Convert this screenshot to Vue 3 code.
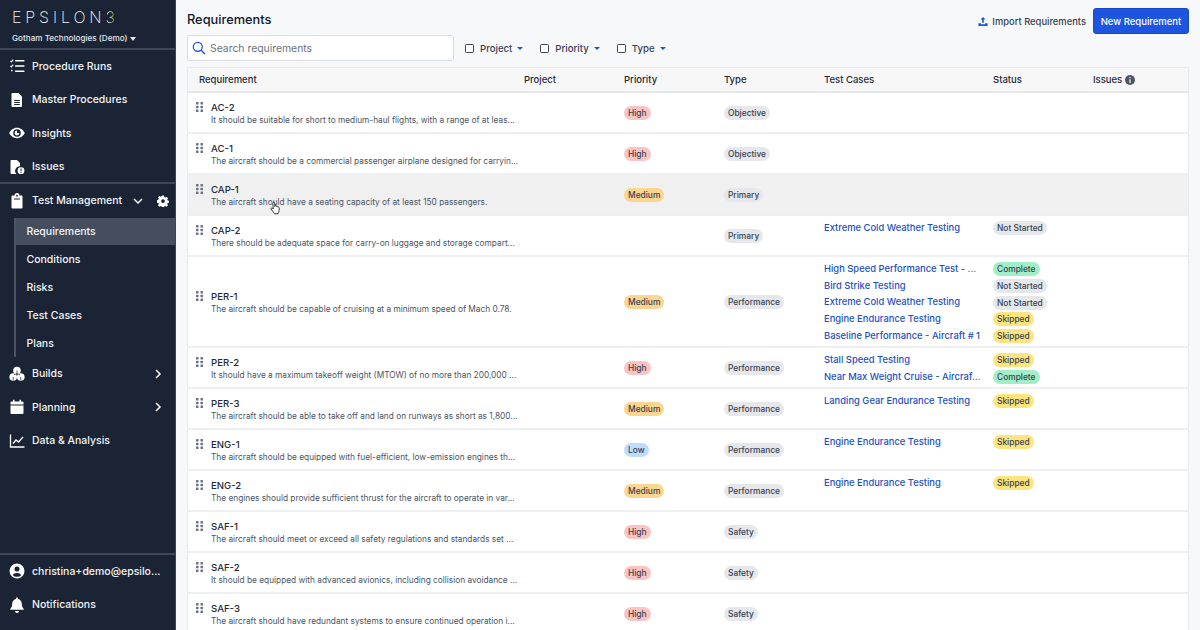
<script setup>
const nav1 = [
  { label: 'Procedure Runs', icon: 'list' },
  { label: 'Master Procedures', icon: 'doc' },
  { label: 'Insights', icon: 'eye' },
  { label: 'Issues', icon: 'issue' },
]
const subs = ['Requirements', 'Conditions', 'Risks', 'Test Cases', 'Plans']
const filters = ['Project', 'Priority', 'Type']
const heads = ['Requirement', 'Project', 'Priority', 'Type', 'Test Cases', 'Status', 'Issues']
const ES = 'Engine Endurance Testing'
const rows = [
  { id: 'AC-2', d: 'It should be suitable for short to medium-haul flights, with a range of at leas...', p: 'High', t: 'Objective', c: [] },
  { id: 'AC-1', d: 'The aircraft should be a commercial passenger airplane designed for carryin...', p: 'High', t: 'Objective', c: [] },
  { id: 'CAP-1', d: 'The aircraft should have a seating capacity of at least 150 passengers.', p: 'Medium', t: 'Primary', c: [], hover: true },
  { id: 'CAP-2', d: 'There should be adequate space for carry-on luggage and storage compart...', p: '', t: 'Primary', c: [['Extreme Cold Weather Testing', 'Not Started']] },
  { id: 'PER-1', d: 'The aircraft should be capable of cruising at a minimum speed of Mach 0.78.', p: 'Medium', t: 'Performance', c: [
    ['High Speed Performance Test - ...', 'Complete'], ['Bird Strike Testing', 'Not Started'], ['Extreme Cold Weather Testing', 'Not Started'], [ES, 'Skipped'], ['Baseline Performance - Aircraft # 1', 'Skipped'],
  ] },
  { id: 'PER-2', d: 'It should have a maximum takeoff weight (MTOW) of no more than 200,000 ...', p: 'High', t: 'Performance', c: [['Stall Speed Testing', 'Skipped'], ['Near Max Weight Cruise - Aircraf...', 'Complete']] },
  { id: 'PER-3', d: 'The aircraft should be able to take off and land on runways as short as 1,800...', p: 'Medium', t: 'Performance', c: [['Landing Gear Endurance Testing', 'Skipped']] },
  { id: 'ENG-1', d: 'The aircraft should be equipped with fuel-efficient, low-emission engines th...', p: 'Low', t: 'Performance', c: [[ES, 'Skipped']] },
  { id: 'ENG-2', d: 'The engines should provide sufficient thrust for the aircraft to operate in var...', p: 'Medium', t: 'Performance', c: [[ES, 'Skipped']] },
  { id: 'SAF-1', d: 'The aircraft should meet or exceed all safety regulations and standards set ...', p: 'High', t: 'Safety', c: [] },
  { id: 'SAF-2', d: 'It should be equipped with advanced avionics, including collision avoidance ...', p: 'High', t: 'Safety', c: [] },
  { id: 'SAF-3', d: 'The aircraft should have redundant systems to ensure continued operation i...', p: 'High', t: 'Safety', c: [] },
]
const cls = (s) => s.toLowerCase().replace(' ', '-')
</script>

<template>
  <div class="app">
    <aside class="side">
      <div class="brand">
        <div class="logo">EPSILON<span class="three">3</span></div>
        <div class="org">Gotham Technologies (Demo) <span class="caret"></span></div>
      </div>
      <nav class="group">
        <a v-for="n in nav1" :key="n.label" class="item">
          <svg class="ic" viewBox="0 0 16 16" fill="#fff">
            <template v-if="n.icon === 'list'">
              <path d="M1.500 3l.9.9 1.800-2.200M1.500 8l.9.9 1.800-2.200" fill="none" stroke="#fff" stroke-width="1.100"/>
              <path d="M2 11.700h1.500v1.500H2z"/>
              <rect x="6" y="2" width="9.500" height="1.500" rx=".5"/><rect x="6" y="7.200" width="9.500" height="1.500" rx=".5"/><rect x="6" y="12.400" width="9.500" height="1.500" rx=".5"/>
            </template>
            <template v-else-if="n.icon === 'doc'">
              <path d="M3.500 1h6l3.500 3.500V14a1 1 0 0 1-1 1H3.500a1 1 0 0 1-1-1V2a1 1 0 0 1 1-1z"/>
              <path d="M5.200 8h5.600v1H5.200zM5.200 10h5.600v1H5.200zM5.200 12h5.600v1H5.200z" fill="#1a2435"/>
            </template>
            <template v-else-if="n.icon === 'eye'">
              <path fill-rule="evenodd" d="M8 2.800C4.500 2.800 1.600 5.200.2 8c1.400 2.800 4.300 5.200 7.800 5.200s6.400-2.400 7.800-5.200C14.400 5.200 11.500 2.800 8 2.800zM8 11.800a3.800 3.800 0 1 1 0-7.600 3.800 3.800 0 0 1 0 7.600z"/>
              <path d="M8 5.600a2.400 2.400 0 1 0 2.400 2.400H8z"/>
            </template>
            <template v-else>
              <path d="M2.500 1h5.500l3 3v3.200A4.500 4.500 0 0 0 7.600 15H2.500a1 1 0 0 1-1-1V2a1 1 0 0 1 1-1z"/>
              <circle cx="12" cy="11.700" r="3.400"/><path d="M11.500 9.500h1v2.800h-1zM11.500 13h1v1h-1z" fill="#1a2435"/>
            </template>
          </svg>
          <span>{{ n.label }}</span>
        </a>
      </nav>
      <div class="group tm">
        <a class="item">
          <svg class="ic" viewBox="0 0 16 16" fill="#fff"><path fill-rule="evenodd" d="M5.500 2.500a2.500 2.500 0 0 1 5 0H12.500a1 1 0 0 1 1 1V14.500a1 1 0 0 1-1 1h-9a1 1 0 0 1-1-1V3.500a1 1 0 0 1 1-1zM8 1.800a.9.900 0 1 0 0 1.800.9.900 0 0 0 0-1.800zM5 5.500v1h6v-1z"/></svg>
          <span>Test Management</span>
          <svg class="chev down" viewBox="0 0 12 12"><path d="M2 4l4 4 4-4" fill="none" stroke="#fff" stroke-width="1.500"/></svg>
          <svg class="gear" viewBox="0 0 16 16" fill="#fff"><path fill-rule="evenodd" d="M6.700.8h2.600l.4 2 1.400.6 1.700-1.100 1.900 1.900-1.100 1.700.6 1.400 2 .4v2.600l-2 .4-.6 1.400 1.100 1.700-1.900 1.900-1.700-1.100-1.400.6-.4 2H6.700l-.4-2-1.400-.6-1.700 1.100-1.900-1.900 1.100-1.700-.6-1.400-2-.4V6.700l2-.4.6-1.400L1.300 3.200l1.900-1.900 1.700 1.100 1.400-.6zM8 5.500a2.500 2.500 0 1 0 0 5 2.500 2.500 0 0 0 0-5z"/></svg>
        </a>
        <div class="subs">
          <a v-for="(s, i) in subs" :key="s" class="sub" :class="{ on: i === 0 }">{{ s }}</a>
        </div>
        <a class="item">
          <svg class="ic" viewBox="0 0 16 16" fill="#fff"><circle cx="8" cy="4.500" r="3.800"/><circle cx="4.200" cy="11" r="3.800"/><circle cx="11.800" cy="11" r="3.800"/><path d="M8 4.500v3.300M4.200 11v3.300M11.800 11v3.300M8 7.500L4.800 9M8 7.500l3.200 1.500" stroke="#1a2435" stroke-width=".7" fill="none"/></svg>
          <span>Builds</span>
          <svg class="chev right" viewBox="0 0 12 12"><path d="M4 2l4 4-4 4" fill="none" stroke="#fff" stroke-width="1.500"/></svg>
        </a>
        <a class="item">
          <svg class="ic" viewBox="0 0 16 16" fill="#fff"><path d="M4 .8h1.500v1.700h5V.8H12v1.700h1.500a1 1 0 0 1 1 1V5.500h-13V3.500a1 1 0 0 1 1-1H4zM1.500 6.500h13V14a1 1 0 0 1-1 1h-11a1 1 0 0 1-1-1z"/></svg>
          <span>Planning</span>
          <svg class="chev right" viewBox="0 0 12 12"><path d="M4 2l4 4-4 4" fill="none" stroke="#fff" stroke-width="1.500"/></svg>
        </a>
        <a class="item">
          <svg class="ic" viewBox="0 0 16 16" fill="none" stroke="#fff" stroke-width="1.300"><path d="M1.500 1.500V14h14"/><path d="M4 10.500l3-3.500 2.500 2 4.500-5"/></svg>
          <span>Data &amp; Analysis</span>
        </a>
      </div>
      <div class="foot">
        <a class="item">
          <svg class="ic" viewBox="0 0 16 16" fill="#fff"><path fill-rule="evenodd" d="M8 .5a7.500 7.500 0 1 0 0 15 7.500 7.500 0 0 0 0-15zM8 3.500a2.500 2.500 0 1 1 0 5 2.500 2.500 0 0 1 0-5zM3.800 12.200c.6-1.500 2-2.300 4.200-2.300s3.600.8 4.200 2.300A5.700 5.700 0 0 1 8 13.800a5.700 5.700 0 0 1-4.200-1.600z"/></svg>
          <span>christina+demo@epsilo...</span>
        </a>
        <a class="item">
          <svg class="ic" viewBox="0 0 16 16" fill="#fff"><path d="M8 .5c.6 0 1 .4 1 1v.6c2.300.5 3.800 2.400 3.800 4.700 0 3 1 3.900 1.900 5v1H1.300v-1c.9-1.100 1.900-2 1.900-5 0-2.300 1.500-4.200 3.800-4.700V1.500c0-.6.400-1 1-1zM6 14h4a2 2 0 0 1-4 0z"/></svg>
          <span>Notifications</span>
        </a>
      </div>
    </aside>

    <main class="main">
      <header class="top">
        <h1>Requirements</h1>
        <div class="actions">
          <a class="import">
            <svg class="upload" viewBox="0 0 12 12" fill="#1d55e0"><path d="M6 .5L9 3.600H7v4H5v-4H3zM.5 8h3v1.300h5V8h3v3.500H.5z"/></svg>
            Import Requirements
          </a>
          <button class="new">New Requirement</button>
        </div>
      </header>
      <div class="tools">
        <label class="search">
          <svg viewBox="0 0 14 14" class="mag"><circle cx="5.800" cy="5.800" r="4.500" fill="none" stroke="#1d55e0" stroke-width="1.300"/><path d="M9.200 9.200L13 13" stroke="#1d55e0" stroke-width="1.400"/></svg>
          <span>Search requirements</span>
        </label>
        <div v-for="f in filters" :key="f" class="filter">
          <i class="box"></i><span>{{ f }}</span><i class="tri"></i>
        </div>
      </div>
      <section class="table">
        <div class="row head">
          <div v-for="h in heads" :key="h" class="cell">
            {{ h }}
            <svg v-if="h === 'Issues'" class="info" viewBox="0 0 10 10"><circle cx="5" cy="5" r="5" fill="#4b5563"/><path d="M4.400 2h1.200v1.200H4.400zM4.400 4.200h1.200V8H4.400z" fill="#fff"/></svg>
          </div>
        </div>
        <div v-for="r in rows" :key="r.id" class="row body" :class="{ hover: r.hover, tall: r.c.length > 2 }">
          <div class="cell req">
            <svg class="drag" viewBox="0 0 7 10" fill="#6b7280"><rect width="2.500" height="2.500" rx=".5"/><rect x="4.500" width="2.500" height="2.500" rx=".5"/><rect y="3.800" width="2.500" height="2.500" rx=".5"/><rect x="4.500" y="3.800" width="2.500" height="2.500" rx=".5"/><rect y="7.500" width="2.500" height="2.500" rx=".5"/><rect x="4.500" y="7.500" width="2.500" height="2.500" rx=".5"/></svg>
            <div class="txt">
              <div class="rid">{{ r.id }}</div>
              <div class="desc">{{ r.d }}</div>
            </div>
            <svg v-if="r.hover" class="hand" viewBox="0 0 12 15"><path d="M3.600 1.200c.6-.5 1.400-.1 1.500.7l.2 4 .3-1c.5-.5 1.200-.3 1.400.3l.1.600c.5-.5 1.200-.3 1.400.3l.1.500c.6-.4 1.300-.1 1.400.6.200 1.700.1 3.800-.9 5.600l-.4 1H5l-3.700-5c-.6-1 .5-1.900 1.300-1.200l1 1-.5-6.200c0-.3.200-.5.500-.7z" fill="#fff" stroke="#111" stroke-width=".9"/></svg>
          </div>
          <div class="cell"></div>
          <div class="cell mid"><span v-if="r.p" class="pill" :class="'p-' + cls(r.p)">{{ r.p }}</span></div>
          <div class="cell mid"><span class="pill grey">{{ r.t }}</span></div>
          <div class="cell cases">
            <a v-for="(c, i) in r.c" :key="i" class="case">{{ c[0] }}</a>
          </div>
          <div class="cell cases">
            <div v-for="(c, i) in r.c" :key="i" class="st"><span class="pill" :class="'s-' + cls(c[1])">{{ c[1] }}</span></div>
          </div>
          <div class="cell"></div>
        </div>
      </section>
    </main>
  </div>
</template>

<style>
html, body { margin: 0; background: #f7f8fa; }
</style>

<style scoped>
.app {
  display: flex;
  width: 1200px;
  height: 630px;
  overflow: hidden;
  font-family: Inter, "Liberation Sans", sans-serif;
  background: #f7f8fa;
  color: #111827;
}
.side {
  width: 175px;
  flex: none;
  background: #1a2435;
  border-right: 1px solid #3b4556;
  display: flex;
  flex-direction: column;
  color: #fff;
}
.brand { height: 49.500px; border-bottom: 2px solid #3c4758; padding: 8px 0 0 12px; box-sizing: border-box; }
.logo { font-size: 16px; font-weight: 200; letter-spacing: 3.900px; line-height: 19px; color: #f7f8fa; }
.three { background: linear-gradient(90deg, #f7f8fa 20%, #8fc73e 60%); -webkit-background-clip: text; background-clip: text; color: transparent; }
.org { margin-top: 4px; font-size: 8.150px; line-height: 15px; font-weight: 500; color: #e5e7eb; display: flex; align-items: center; gap: 2px; }
.caret { border: 3px solid transparent; border-top: 4px solid #e5e7eb; border-bottom: 0; width: 0; height: 0; margin-left: 1px; }
.item { display: flex; align-items: center; height: 33.500px; padding-left: 9px; font-size: 10.500px; font-weight: 500; color: #f3f4f6; white-space: nowrap; }
.ic { width: 16px; height: 16px; margin-right: 7px; flex: none; }
.tm { border-top: 2px solid #3c4758; margin-top: -1.500px; }
.chev { width: 12px; height: 12px; flex: none; }
.down { margin-left: 10px; }
.right { margin-left: auto; margin-right: 11px; }
.gear { width: 12px; height: 12px; margin-left: 13px; }
.subs { margin-left: 14px; border-left: 2px solid #4b5563; }
.sub { display: flex; align-items: center; height: 27.900px; padding-left: 10.500px; font-size: 10.500px; font-weight: 500; color: #f3f4f6; }
.sub.on { background: #454e5e; }
.foot { margin-top: auto; border-top: 2px solid #3c4758; padding-bottom: 8.500px; }

.main { flex: 1; min-width: 0; padding: 0 11px; }
.top { display: flex; align-items: flex-start; justify-content: space-between; height: 35px; }
h1 { margin: 0; font-size: 12.800px; font-weight: 500; line-height: 40px; color: #111827; }
.actions { display: flex; align-items: center; gap: 7px; margin-top: 8px; }
.import { display: flex; align-items: center; gap: 4px; font-size: 9.400px; font-weight: 500; color: #374151; }
.upload { width: 10px; height: 11px; }
.new { width: 96px; height: 26px; box-sizing: border-box; background: #1d55e0; border: 1px solid #1a49c4; border-radius: 3px; color: #fff; font: 500 9.500px Inter, sans-serif; padding: 0; }
.tools { display: flex; align-items: center; height: 26px; }
.search { width: 267px; height: 26px; box-sizing: border-box; display: flex; align-items: center; gap: 4px; padding-left: 4px; background: #fff; border: 1px solid #d8dbe0; border-radius: 3px; font-size: 10.400px; color: #6b7280; margin-right: 11px; }
.mag { width: 14px; height: 14px; }
.filter { display: flex; align-items: center; font-size: 9.600px; font-weight: 500; color: #374151; margin-right: 17px; }
.box { width: 7px; height: 7px; border: 1px solid #374151; border-radius: 1.500px; margin-right: 6px; background: #fff; }
.tri { width: 0; height: 0; border: 3px solid transparent; border-top: 3.500px solid #1d55e0; border-bottom: 0; margin-left: 5px; }
.table { margin-top: 6px; border: 1px solid #e9ebee; border-bottom: 0; background: #fff; }
.row { display: grid; grid-template-columns: 324px 100px 100px 100px 169px 100px 107px; }
.head { height: 23px; background: #f7f7f7; border-bottom: 2px solid #e5e7eb; font-size: 9.500px; font-weight: 500; color: #1f2937; align-items: center; }
.cell { padding-left: 12px; min-width: 0; }
.head .cell { display: flex; align-items: center; gap: 3px; }
.head .cell:first-child { padding-left: 11px; }
.info { width: 10px; height: 10px; }
.body { height: 39px; border-bottom: 2px solid #eeeff1; }
.body.tall { height: 89px; }
.body.hover { background: #f0f0f0; }
.req { position: relative; display: flex; padding-left: 8px; }
.drag { width: 7px; height: 10px; margin-top: 9px; margin-right: 8px; flex: none; }
.txt { padding-top: 8px; }
.tall .txt { padding-top: 33px; }
.tall .drag { margin-top: 34px; }
.rid { font-size: 9.600px; line-height: 13px; font-weight: 500; color: #1f2937; }
.desc { font-size: 8.300px; line-height: 13px; color: #4b5563; white-space: nowrap; }
.hand { position: absolute; left: 82px; top: 26px; width: 11px; height: 14px; }
.mid { display: flex; align-items: center; }
.pill { display: inline-flex; align-items: center; height: 14px; padding: 0 4px; border-radius: 7px; font-size: 8.400px; font-weight: 500; color: #374151; white-space: nowrap; }
.grey { background: #e5e7eb; }
.p-high { background: #fbc4c4; }
.p-medium { background: #fcd591; }
.p-low { background: #bfdbfe; }
.s-not-started { background: #e5e7eb; }
.s-complete { background: #a2eec8; }
.s-skipped { background: #fde47f; }
.cases { padding-top: 4px; }
.case { display: block; height: 16.700px; line-height: 16.700px; font-size: 9.400px; font-weight: 500; color: #1d4fc4; white-space: nowrap; }
.st { height: 16.700px; display: flex; align-items: center; }
</style>
